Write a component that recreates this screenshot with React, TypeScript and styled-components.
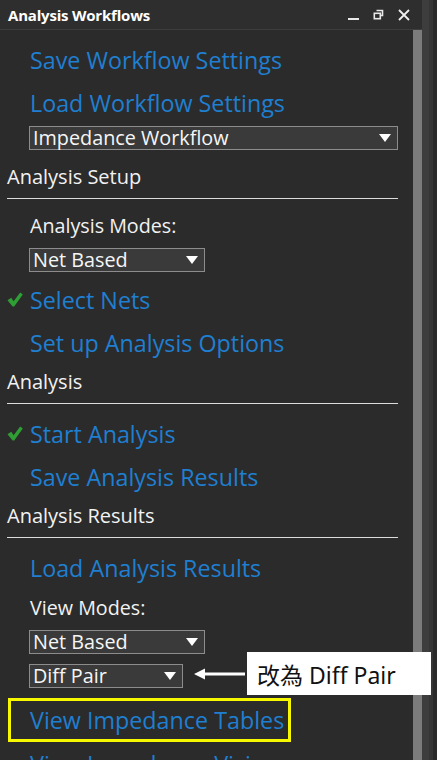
import styled, { createGlobalStyle } from 'styled-components';

const GlobalStyle = createGlobalStyle`
  html, body {
    margin: 0;
    padding: 0;
    background: #2b2b2b;
  }
  body {
    font-family: 'Open Sans', 'Noto Sans', sans-serif;
  }
`;

const Window = styled.div`
  width: 437px;
  height: 760px;
  display: flex;
  overflow: hidden;
  position: relative;
  background: #2b2b2b;
`;

const Main = styled.div`
  width: 422px;
  display: flex;
  flex-direction: column;
`;

const TitleBar = styled.div`
  height: 29px;
  border-bottom: 1px solid #3e3e3e;
  background: #2e2e2e;
  display: flex;
  align-items: center;
  justify-content: space-between;
  padding: 0 12px 0 8px;
`;

const Title = styled.span`
  color: #ffffff;
  font-weight: 700;
  font-size: 15px;
  letter-spacing: -0.2px;
`;

const Controls = styled.div`
  display: flex;
  align-items: center;
  gap: 14px;
`;

const Body = styled.div`
  flex: 1;
  display: flex;
  gap: 2px;
  min-height: 0;
`;

const Panel = styled.div`
  width: 411px;
  box-sizing: border-box;
  padding: 8px 13px 0 7px;
  display: flex;
  flex-direction: column;
`;

const Scrollbar = styled.div`
  width: 9px;
  background: #7b7b7b;
`;

const Edge = styled.div`
  width: 15px;
  display: flex;
`;

const Strip = styled.div<{ $w: number; $c: string }>`
  width: ${(p) => p.$w}px;
  background: ${(p) => p.$c};
`;

const LinkRow = styled.div`
  height: 43px;
  display: grid;
  grid-template-columns: 23px 1fr;
  align-items: center;
  flex-shrink: 0;
`;

const Link = styled.span`
  color: #1f7fd1;
  font-size: 23.3px;
  white-space: nowrap;
`;

const Header = styled.div<{ $top: number }>`
  margin-top: ${(p) => p.$top}px;
  margin-bottom: 8px;
  line-height: 28px;
  padding-bottom: 7px;
  border-bottom: 1px solid #dcdcdc;
  color: #f2f2f2;
  font-size: 20px;
  flex-shrink: 0;
`;

const Label = styled.div`
  height: 36px;
  display: flex;
  align-items: center;
  padding-left: 23px;
  color: #f2f2f2;
  font-size: 19.7px;
  flex-shrink: 0;
`;

const DropRow = styled.div<{ $top: number; $bottom: number }>`
  margin: ${(p) => p.$top}px 0 ${(p) => p.$bottom}px 22px;
  display: flex;
  align-items: center;
  position: relative;
  flex-shrink: 0;
`;

const Select = styled.div<{ $w: number }>`
  width: ${(p) => p.$w}px;
  height: 24px;
  box-sizing: border-box;
  border: 1px solid #8c8c8c;
  background: #3a3a3a;
  display: flex;
  align-items: center;
  justify-content: space-between;
  padding: 0 6px 0 3px;
  color: #f6f6f6;
  font-size: 19.8px;
  line-height: 22px;
  white-space: nowrap;
`;

const Caret = styled.span`
  width: 0;
  height: 0;
  border-left: 6px solid transparent;
  border-right: 6px solid transparent;
  border-top: 8px solid #ffffff;
`;

const Highlight = styled.div`
  margin-left: 1px;
  width: 283px;
  height: 44px;
  box-sizing: border-box;
  border: 3px solid #f7f700;
  display: flex;
  align-items: center;
  padding-left: 19px;
  flex-shrink: 0;
`;

const Note = styled.div`
  position: absolute;
  left: 164px;
  top: -12px;
  display: flex;
  align-items: center;
  gap: 2px;
`;

const NoteBox = styled.div`
  width: 184px;
  height: 43px;
  box-sizing: border-box;
  background: #ffffff;
  display: flex;
  align-items: center;
  padding-left: 10px;
  color: #111111;
  font-family: 'Noto Sans', 'Noto Sans CJK TC', sans-serif;
  font-size: 23px;
  white-space: nowrap;
`;

const Check = () => (
  <svg width="16" height="15" viewBox="0 0 16 15">
    <path d="M0.5 8.2 L4.2 5.8 L6.6 9.2 L13.2 0.5 L15.8 2.6 L7.2 14.5 L5.6 14.5 Z" fill="#2f9e35" />
  </svg>
);

const Arrow = () => (
  <svg width="52" height="14" viewBox="0 0 52 14">
    <path d="M1 7 L12 1.5 L12 5.5 L52 5.5 L52 8.5 L12 8.5 L12 12.5 Z" fill="#ffffff" />
  </svg>
);

const Minimize = () => (
  <svg width="11" height="12" viewBox="0 0 11 12">
    <rect x="0" y="9" width="11" height="2" fill="#e8e8e8" />
  </svg>
);

const Restore = () => (
  <svg width="11" height="11" viewBox="0 0 11 11">
    <path d="M3.5 1.5 H9.5 V6.5 H7.5" stroke="#e8e8e8" strokeWidth="1.6" fill="none" />
    <rect x="1.3" y="4.3" width="6" height="5.4" stroke="#e8e8e8" strokeWidth="1.6" fill="none" />
  </svg>
);

const Close = () => (
  <svg width="12" height="12" viewBox="0 0 12 12">
    <path d="M1 1 L11 11 M11 1 L1 11" stroke="#f0f0f0" strokeWidth="1.8" />
  </svg>
);

const App = () => {
  return (
    <>
      <GlobalStyle />
      <Window>
        <Main>
          <TitleBar>
            <Title>Analysis Workflows</Title>
            <Controls>
              <Minimize />
              <Restore />
              <Close />
            </Controls>
          </TitleBar>
          <Body>
            <Panel>
              <LinkRow>
                <span />
                <Link>Save Workflow Settings</Link>
              </LinkRow>
              <LinkRow>
                <span />
                <Link>Load Workflow Settings</Link>
              </LinkRow>
              <DropRow $top={2} $bottom={0}>
                <Select $w={369}>
                  Impedance Workflow
                  <Caret />
                </Select>
              </DropRow>

              <Header $top={13}>Analysis Setup</Header>
              <Label>Analysis Modes:</Label>
              <DropRow $top={5} $bottom={6}>
                <Select $w={176}>
                  Net Based
                  <Caret />
                </Select>
              </DropRow>
              <LinkRow>
                <Check />
                <Link>Select Nets</Link>
              </LinkRow>
              <LinkRow>
                <span />
                <Link>Set up Analysis Options</Link>
              </LinkRow>

              <Header $top={4}>Analysis</Header>
              <LinkRow>
                <Check />
                <Link>Start Analysis</Link>
              </LinkRow>
              <LinkRow>
                <span />
                <Link>Save Analysis Results</Link>
              </LinkRow>

              <Header $top={4}>Analysis Results</Header>
              <LinkRow>
                <span />
                <Link>Load Analysis Results</Link>
              </LinkRow>
              <Label>View Modes:</Label>
              <DropRow $top={5} $bottom={0}>
                <Select $w={176}>
                  Net Based
                  <Caret />
                </Select>
              </DropRow>
              <DropRow $top={10} $bottom={10}>
                <Select $w={154}>
                  Diff Pair
                  <Caret />
                </Select>
                <Note>
                  <Arrow />
                  <NoteBox>改為 Diff Pair</NoteBox>
                </Note>
              </DropRow>
              <Highlight>
                <Link>View Impedance Tables</Link>
              </Highlight>
              <LinkRow>
                <span />
                <Link>View Impedance Vision</Link>
              </LinkRow>
            </Panel>
            <Scrollbar />
          </Body>
        </Main>
        <Edge>
          <Strip $w={7} $c="#3d3d3d" />
          <Strip $w={4} $c="#363636" />
          <Strip $w={4} $c="#2a2a2a" />
        </Edge>
      </Window>
    </>
  );
};

export default App;
